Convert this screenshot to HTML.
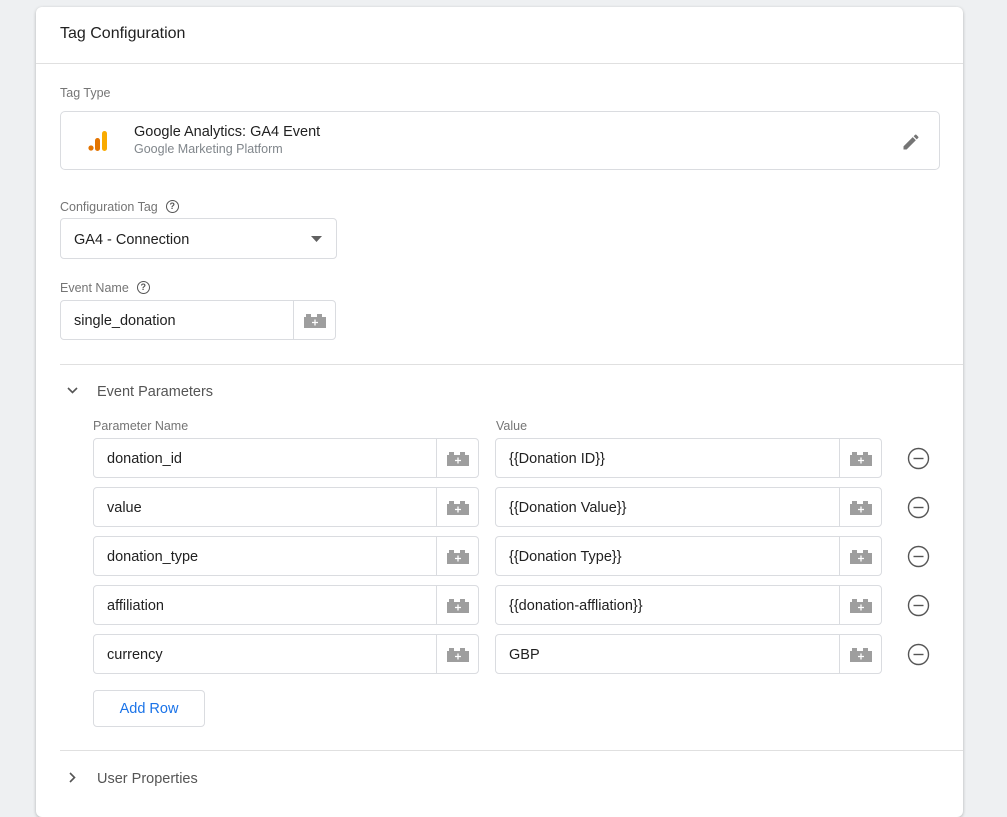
<!DOCTYPE html>
<html><head><style>
*{box-sizing:border-box;margin:0;padding:0}
body{width:1007px;height:800px;background:#eef0f2;font-family:"Liberation Sans",Arial,sans-serif;position:relative;overflow:hidden;color:#212121}
.card{position:absolute;left:36px;top:7px;width:927px;height:810px;background:#fff;border-radius:6px;box-shadow:0 1px 3px rgba(0,0,0,.25)}
.a{position:absolute}
.lbl{font-size:12.5px;color:#757575}
.box{position:absolute;border:1px solid #dadce0;border-radius:4px;background:#fff;font-size:14.5px;color:#212121}
.box .t{position:absolute;left:13px;top:12px}
.ic{position:absolute;right:0;top:0;width:42px;height:100%;border-left:1px solid #dadce0}
.ic svg{position:absolute;left:10px;top:13px}
.hr{position:absolute;height:1px;background:#e0e0e0}
.help{display:inline-block;width:13px;height:13px;border:1.5px solid #555;border-radius:50%;font-size:9px;line-height:10px;text-align:center;font-weight:bold;color:#555;vertical-align:middle;margin-left:8px;margin-top:-2px}
</style></head><body>
<div class="card"></div>
<div class="a" style="left:60px;top:25px;font-size:16px;color:#212121">Tag Configuration</div>
<div class="hr" style="left:36px;top:63px;width:927px"></div>
<div class="a lbl" style="left:60px;top:86px">Tag Type</div>
<div class="box" style="left:60px;top:111px;width:880px;height:59px;border-radius:5px">
<svg class="a" style="left:26px;top:17px" width="22" height="24"><circle cx="4" cy="19" r="2.6" fill="#e37400"/><rect x="8" y="9" width="5" height="13" rx="2.5" fill="#e37400"/><rect x="15" y="2" width="5" height="20" rx="2.5" fill="#f9ab00"/></svg>
<div class="a" style="left:73px;top:12px;font-size:14.5px;color:#212121">Google Analytics: GA4 Event</div>
<div class="a" style="left:73px;top:30px;font-size:12.5px;color:#80868b">Google Marketing Platform</div>
<svg class="a" style="left:840px;top:20px" width="20" height="20" viewBox="0 0 24 24"><path d="M3 17.25V21h3.75L17.81 9.94l-3.75-3.75L3 17.25zM20.71 7.04a1 1 0 000-1.41l-2.34-2.34a1 1 0 00-1.41 0l-1.83 1.83 3.75 3.75 1.83-1.83z" fill="#757575"/></svg>
</div>
<div class="a lbl" style="left:60px;top:200px">Configuration Tag<span class="help">?</span></div>
<div class="box" style="left:60px;top:218px;width:277px;height:41px"><span class="t" style="top:13px">GA4 - Connection</span>
<svg class="a" style="left:250px;top:17px" width="12" height="6"><path d="M0 0h11L5.5 6z" fill="#616161"/></svg></div>
<div class="a lbl" style="left:60px;top:281px">Event Name<span class="help">?</span></div>
<div class="box" style="left:60px;top:300px;width:276px;height:40px"><span class="t">single_donation</span><div class="ic"><svg width="22" height="14"><path d="M0 3h2V0h5v3h6V0h5v3h4v11H0z" fill="#9e9e9e"/><path d="M11 5.5v6M8 8.5h6" stroke="#fff" stroke-width="1.3"/></svg></div></div>
<div class="hr" style="left:60px;top:364px;width:903px"></div>
<svg class="a" style="left:67px;top:387px" width="11" height="7"><path d="M1 1l4.5 4.5L10 1" stroke="#555" stroke-width="1.6" fill="none"/></svg>
<div class="a" style="left:97px;top:384px;font-size:14.5px;color:#555">Event Parameters</div>
<div class="a lbl" style="left:93px;top:419px">Parameter Name</div>
<div class="a lbl" style="left:496px;top:419px">Value</div>

<div class="box" style="left:93px;top:438px;width:386px;height:40px"><span class="t">donation_id</span><div class="ic"><svg width="22" height="14"><path d="M0 3h2V0h5v3h6V0h5v3h4v11H0z" fill="#9e9e9e"/><path d="M11 5.5v6M8 8.5h6" stroke="#fff" stroke-width="1.3"/></svg></div></div>
<div class="box" style="left:495px;top:438px;width:387px;height:40px"><span class="t">{{Donation ID}}</span><div class="ic"><svg width="22" height="14"><path d="M0 3h2V0h5v3h6V0h5v3h4v11H0z" fill="#9e9e9e"/><path d="M11 5.5v6M8 8.5h6" stroke="#fff" stroke-width="1.3"/></svg></div></div>
<svg class="a" style="left:907px;top:447px" width="23" height="23"><circle cx="11.5" cy="11.5" r="10" stroke="#555" stroke-width="1.4" fill="none"/><path d="M6.5 11.5h10" stroke="#555" stroke-width="1.4"/></svg>

<div class="box" style="left:93px;top:487px;width:386px;height:40px"><span class="t">value</span><div class="ic"><svg width="22" height="14"><path d="M0 3h2V0h5v3h6V0h5v3h4v11H0z" fill="#9e9e9e"/><path d="M11 5.5v6M8 8.5h6" stroke="#fff" stroke-width="1.3"/></svg></div></div>
<div class="box" style="left:495px;top:487px;width:387px;height:40px"><span class="t">{{Donation Value}}</span><div class="ic"><svg width="22" height="14"><path d="M0 3h2V0h5v3h6V0h5v3h4v11H0z" fill="#9e9e9e"/><path d="M11 5.5v6M8 8.5h6" stroke="#fff" stroke-width="1.3"/></svg></div></div>
<svg class="a" style="left:907px;top:496px" width="23" height="23"><circle cx="11.5" cy="11.5" r="10" stroke="#555" stroke-width="1.4" fill="none"/><path d="M6.5 11.5h10" stroke="#555" stroke-width="1.4"/></svg>

<div class="box" style="left:93px;top:536px;width:386px;height:40px"><span class="t">donation_type</span><div class="ic"><svg width="22" height="14"><path d="M0 3h2V0h5v3h6V0h5v3h4v11H0z" fill="#9e9e9e"/><path d="M11 5.5v6M8 8.5h6" stroke="#fff" stroke-width="1.3"/></svg></div></div>
<div class="box" style="left:495px;top:536px;width:387px;height:40px"><span class="t">{{Donation Type}}</span><div class="ic"><svg width="22" height="14"><path d="M0 3h2V0h5v3h6V0h5v3h4v11H0z" fill="#9e9e9e"/><path d="M11 5.5v6M8 8.5h6" stroke="#fff" stroke-width="1.3"/></svg></div></div>
<svg class="a" style="left:907px;top:545px" width="23" height="23"><circle cx="11.5" cy="11.5" r="10" stroke="#555" stroke-width="1.4" fill="none"/><path d="M6.5 11.5h10" stroke="#555" stroke-width="1.4"/></svg>

<div class="box" style="left:93px;top:585px;width:386px;height:40px"><span class="t">affiliation</span><div class="ic"><svg width="22" height="14"><path d="M0 3h2V0h5v3h6V0h5v3h4v11H0z" fill="#9e9e9e"/><path d="M11 5.5v6M8 8.5h6" stroke="#fff" stroke-width="1.3"/></svg></div></div>
<div class="box" style="left:495px;top:585px;width:387px;height:40px"><span class="t">{{donation-affliation}}</span><div class="ic"><svg width="22" height="14"><path d="M0 3h2V0h5v3h6V0h5v3h4v11H0z" fill="#9e9e9e"/><path d="M11 5.5v6M8 8.5h6" stroke="#fff" stroke-width="1.3"/></svg></div></div>
<svg class="a" style="left:907px;top:594px" width="23" height="23"><circle cx="11.5" cy="11.5" r="10" stroke="#555" stroke-width="1.4" fill="none"/><path d="M6.5 11.5h10" stroke="#555" stroke-width="1.4"/></svg>

<div class="box" style="left:93px;top:634px;width:386px;height:40px"><span class="t">currency</span><div class="ic"><svg width="22" height="14"><path d="M0 3h2V0h5v3h6V0h5v3h4v11H0z" fill="#9e9e9e"/><path d="M11 5.5v6M8 8.5h6" stroke="#fff" stroke-width="1.3"/></svg></div></div>
<div class="box" style="left:495px;top:634px;width:387px;height:40px"><span class="t">GBP</span><div class="ic"><svg width="22" height="14"><path d="M0 3h2V0h5v3h6V0h5v3h4v11H0z" fill="#9e9e9e"/><path d="M11 5.5v6M8 8.5h6" stroke="#fff" stroke-width="1.3"/></svg></div></div>
<svg class="a" style="left:907px;top:643px" width="23" height="23"><circle cx="11.5" cy="11.5" r="10" stroke="#555" stroke-width="1.4" fill="none"/><path d="M6.5 11.5h10" stroke="#555" stroke-width="1.4"/></svg>

<div class="box" style="left:93px;top:690px;width:112px;height:37px;text-align:center;line-height:37px;color:#1a73e8;font-size:14.5px">Add Row</div>
<div class="hr" style="left:60px;top:750px;width:903px"></div>
<svg class="a" style="left:69px;top:772px" width="7" height="11"><path d="M1 1l4.5 4.5L1 10" stroke="#555" stroke-width="1.6" fill="none"/></svg>
<div class="a" style="left:97px;top:771px;font-size:14.5px;color:#555">User Properties</div>
</body></html>
